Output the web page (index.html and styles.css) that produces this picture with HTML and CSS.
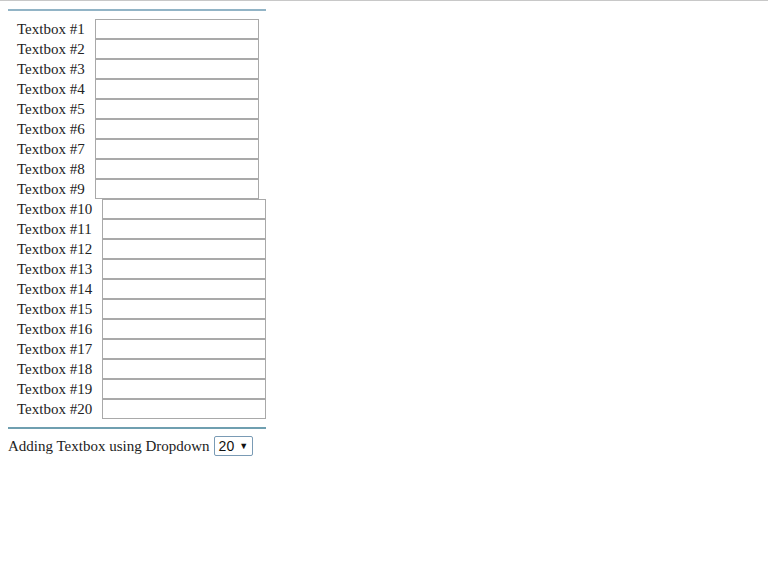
FILE: index.html
```html
<!DOCTYPE html>
<html>
<head>
<meta charset="utf-8">
<link rel="stylesheet" href="styles.css">
</head>
<body>
<div class="page">
  <hr class="rule top">
  <div class="rows">
    <div class="row"><span class="lbl">Textbox #1</span><input class="box" type="text"></div>
    <div class="row"><span class="lbl">Textbox #2</span><input class="box" type="text"></div>
    <div class="row"><span class="lbl">Textbox #3</span><input class="box" type="text"></div>
    <div class="row"><span class="lbl">Textbox #4</span><input class="box" type="text"></div>
    <div class="row"><span class="lbl">Textbox #5</span><input class="box" type="text"></div>
    <div class="row"><span class="lbl">Textbox #6</span><input class="box" type="text"></div>
    <div class="row"><span class="lbl">Textbox #7</span><input class="box" type="text"></div>
    <div class="row"><span class="lbl">Textbox #8</span><input class="box" type="text"></div>
    <div class="row"><span class="lbl">Textbox #9</span><input class="box" type="text"></div>
    <div class="row"><span class="lbl">Textbox #10</span><input class="box" type="text"></div>
    <div class="row"><span class="lbl">Textbox #11</span><input class="box" type="text"></div>
    <div class="row"><span class="lbl">Textbox #12</span><input class="box" type="text"></div>
    <div class="row"><span class="lbl">Textbox #13</span><input class="box" type="text"></div>
    <div class="row"><span class="lbl">Textbox #14</span><input class="box" type="text"></div>
    <div class="row"><span class="lbl">Textbox #15</span><input class="box" type="text"></div>
    <div class="row"><span class="lbl">Textbox #16</span><input class="box" type="text"></div>
    <div class="row"><span class="lbl">Textbox #17</span><input class="box" type="text"></div>
    <div class="row"><span class="lbl">Textbox #18</span><input class="box" type="text"></div>
    <div class="row"><span class="lbl">Textbox #19</span><input class="box" type="text"></div>
    <div class="row"><span class="lbl">Textbox #20</span><input class="box" type="text"></div>
  </div>
  <hr class="rule bottom">
  <div class="footer">
    <span class="caption">Adding Textbox using Dropdown</span>
    <span class="select"><span class="val">20</span><span class="arrow">▼</span></span>
  </div>
</div>
</body>
</html>
```
FILE: styles.css
```css
html {
  border-top: 1px solid #c8c8c8;
  background: #fff;
}
body {
  margin: 0;
  padding: 8px;
  font-family: "Liberation Serif", "Times New Roman", serif;
  font-size: 15px;
  color: #222;
}
.page {
  width: 258px;
}
.rule {
  margin: 0;
  border: 0;
  height: 2px;
}
.rule.top {
  margin-bottom: 8px;
  background: #92b4c6;
}
.rule.bottom {
  margin-top: 8px;
  margin-bottom: 7px;
  background: #6f9fb0;
}
.rows {
  display: flex;
  flex-direction: column;
  padding-left: 9px;
}
.row {
  display: flex;
  align-items: center;
  height: 20px;
  gap: 10px;
}
.lbl {
  white-space: nowrap;
  line-height: 20px;
}
.box {
  box-sizing: border-box;
  width: 164px;
  height: 20px;
  margin: 0;
  border: 1px solid #a9a9a9;
  background: #fff;
  padding: 0 2px;
}
.footer {
  display: flex;
  align-items: center;
  gap: 4px;
  height: 20px;
  white-space: nowrap;
}
.select {
  display: inline-flex;
  align-items: center;
  box-sizing: border-box;
  height: 20px;
  width: 39px;
  border: 1px solid #7a9bb5;
  border-radius: 2px;
  padding: 0 4px;
  font-family: "Liberation Sans", Arial, sans-serif;
  font-size: 14px;
  color: #111;
  gap: 5px;
}
.arrow {
  font-size: 9px;
}
```
